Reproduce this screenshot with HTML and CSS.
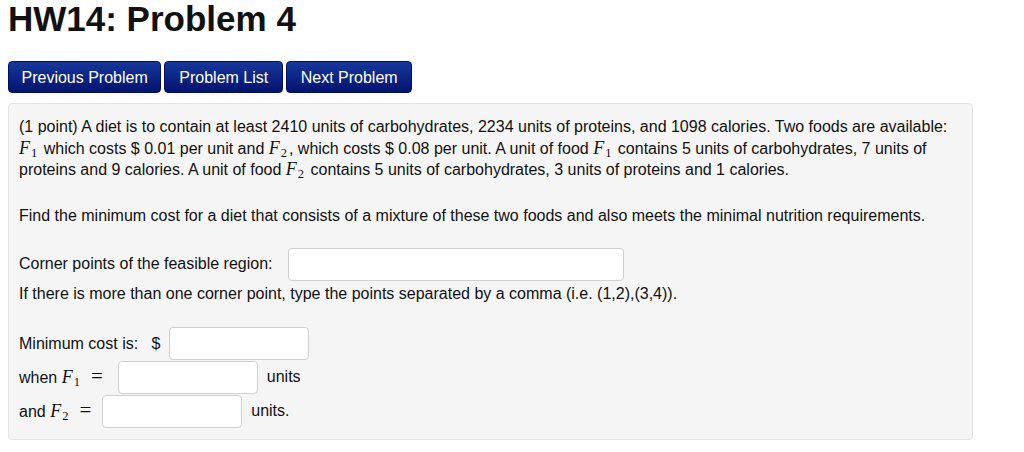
FILE: index.html
```html
<!DOCTYPE html>
<html>
<head>
<meta charset="utf-8">
<link rel="stylesheet" href="styles.css">
</head>
<body>
<h1 class="title">HW14: Problem 4</h1>
<div class="nav">
  <a class="btn btn-prev">Previous Problem</a>
  <a class="btn">Problem List</a>
  <a class="btn btn-next">Next Problem</a>
</div>
<div class="problem">
  <p class="para">(1 point) A diet is to contain at least 2410 units of carbohydrates, 2234 units of proteins, and 1098 calories. Two foods are available: <span class="m"><i>F</i><sub>1</sub></span> which costs $ 0.01 per unit and <span class="m"><i>F</i><sub>2</sub></span>, which costs $ 0.08 per unit. A unit of food <span class="m"><i>F</i><sub>1</sub></span> contains 5 units of carbohydrates, 7 units of proteins and 9 calories. A unit of food <span class="m"><i>F</i><sub>2</sub></span> contains 5 units of carbohydrates, 3 units of proteins and 1 calories.</p>
  <p class="para para2">Find the minimum cost for a diet that consists of a mixture of these two foods and also meets the minimal nutrition requirements.</p>
  <div class="row row-corner"><span>Corner points of the feasible region:</span><span class="inp inp-corner"></span></div>
  <div class="hint">If there is more than one corner point, type the points separated by a comma (i.e. (1,2),(3,4)).</div>
  <div class="row row-cost"><span>Minimum cost is:&nbsp;&nbsp; $</span><span class="inp inp-cost"></span></div>
  <div class="row row-f1"><span>when <span class="m"><i>F</i><sub>1</sub><span class="eq">=</span></span></span><span class="inp inp-f1"></span><span class="unit">units</span></div>
  <div class="row row-f2"><span>and <span class="m"><i>F</i><sub>2</sub><span class="eq">=</span></span></span><span class="inp inp-f2"></span><span class="unit">units.</span></div>
</div>
</body>
</html>
```
FILE: styles.css
```css
html, body {
  margin: 0;
  padding: 0;
  background: #fff;
}
body {
  font-family: "Liberation Sans", Arial, Helvetica, sans-serif;
  color: #111;
  padding: 0 8px;
}
.title {
  margin: 0;
  font-size: 35px;
  line-height: 38px;
  font-weight: bold;
  color: #111;
}
.nav {
  display: flex;
  gap: 4px;
  margin-top: 23px;
}
.btn {
  display: block;
  height: 32px;
  line-height: 31px;
  padding: 0 14px;
  font-size: 16px;
  color: #fff;
  background: linear-gradient(#17379c, #02136f);
  border: 1px solid #020f60;
  border-radius: 4px;
  box-sizing: border-box;
}
.btn-prev { padding: 0 12.5px; }
.btn-next { padding: 0 13.5px; }
.nav .btn + .btn { margin-left: -1px; }
.problem {
  margin-top: 10px;
  width: 965px;
  height: 337px;
  box-sizing: border-box;
  background: #f5f5f5;
  border: 1px solid #e3e3e3;
  border-radius: 4px;
  padding: 12px 10px 11px 10px;
  font-size: 16px;
  line-height: 21.5px;
}
.para {
  margin: 0;
}
.para2 {
  margin-top: 24px;
}
.m {
  font-family: "Liberation Serif", "Times New Roman", serif;
  font-size: 18px;
  line-height: 1;
  white-space: nowrap;
}
.m i {
  font-style: italic;
}
.m sub {
  font-size: 12.5px;
  vertical-align: -3px;
  line-height: 0;
  margin-left: 1px;
  margin-right: 2px;
}
.eq {
  margin-left: 9px;
  font-size: 21px;
}
.row {
  display: flex;
  align-items: center;
  height: 33px;
}
.row-corner { margin-top: 21.5px; }
.inp {
  display: block;
  height: 33px;
  box-sizing: border-box;
  background: #fff;
  border: 1px solid #d0d0d0;
  border-radius: 4px;
}
.inp-corner { width: 336px; margin-left: 16px; }
.inp-cost { width: 140px; margin-left: 9px; }
.inp-f1 { width: 140px; margin-left: 15px; }
.inp-f2 { width: 140px; margin-left: 11px; }
.unit { margin-left: 9px; }
.hint {
  margin-top: 2px;
}
.row-cost { margin-top: 23px; }
.row-f1, .row-f2 { height: 34px; }
```
